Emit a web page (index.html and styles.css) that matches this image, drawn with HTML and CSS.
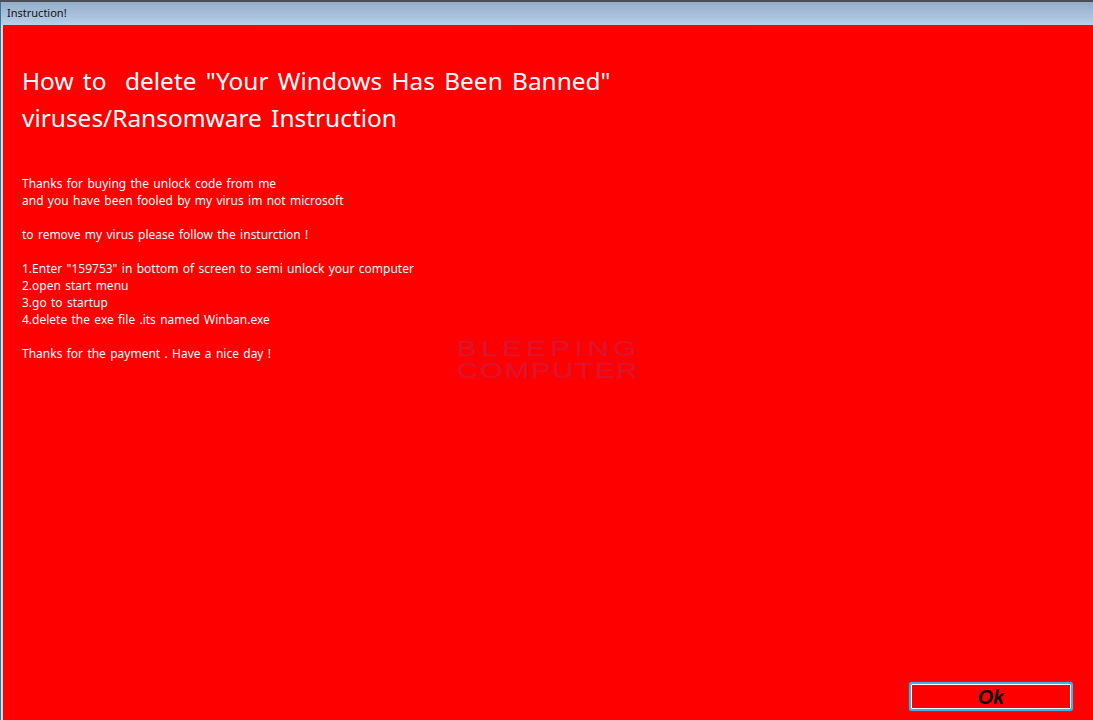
FILE: index.html
```html
<!DOCTYPE html>
<html lang="en">
<head>
<meta charset="utf-8">
<title>Instruction!</title>
<link rel="stylesheet" href="styles.css">
</head>
<body>
<div class="window">
  <header class="titlebar">Instruction!</header>
  <main class="content">
    <h1 class="heading">How to&nbsp; delete "Your Windows Has Been Banned"<br>viruses/Ransomware Instruction</h1>
    <p class="message">Thanks for buying the unlock code from me<br>and you have been fooled by my virus im not microsoft<br><br>to remove my virus please follow the insturction !<br><br>1.Enter "159753" in bottom of screen to semi unlock your computer<br>2.open start menu<br>3.go to startup<br>4.delete the exe file .its named Winban.exe<br><br>Thanks for the payment . Have a nice day !</p>
    <div class="watermark">
      <div class="wm-top">BLEEPING</div>
      <div class="wm-bottom">COMPUTER</div>
    </div>
    <div class="actions"><button class="ok" type="button">Ok</button></div>
  </main>
</div>
</body>
</html>
```
FILE: styles.css
```css
* { box-sizing: border-box; }
html, body { margin: 0; height: 100%; overflow: hidden; }
.window {
  height: 720px;
  display: flex;
  flex-direction: column;
  border-top: 2px solid #4a4f55;
  background: linear-gradient(90deg, #3f7396 0 1px, #cfe3f3 1px 3px);
}
.titlebar {
  height: 23px;
  padding: 3px 0 0 6px;
  font: 11px/16px "Noto Sans", sans-serif;
  color: #111;
  background: linear-gradient(#94adc9, #b7cfe9);
  border-left: 1px solid #3f7396;
}
.content {
  position: relative;
  flex: 1;
  margin-left: 3px;
  padding: 37px 0 0 19px;
  display: flex;
  flex-direction: column;
  background: #ff0000;
  color: #fff;
}
.heading {
  margin: 0;
  font: 400 24.45px/37px "Noto Sans", sans-serif;
  word-spacing: 2.9px;
}
.message {
  margin: 39px 0 0;
  font: 12px/17px "Noto Sans", sans-serif;
  word-spacing: 1.2px;
}
.watermark {
  position: absolute;
  left: 454px;
  top: 313px;
  width: 150px;
  transform: scaleX(1.32);
  transform-origin: left top;
  font: 400 22.4px/22px "Liberation Sans", sans-serif;
  color: #e0122c;
  -webkit-text-stroke: 0.4px #e0122c;
  white-space: nowrap;
}
.wm-top { letter-spacing: 3.4px; }
.wm-bottom { letter-spacing: 1.25px; }
.actions {
  margin-top: auto;
  padding: 0 20px 9px 0;
  display: flex;
  justify-content: flex-end;
}
.ok {
  width: 164px;
  height: 29px;
  padding: 2px 0 0;
  background: #ff0000;
  border: 2px solid #38b4e6;
  border-radius: 3px;
  box-shadow: inset 0 0 0 1px #fff, 0 0 1px #38b4e6;
  font: italic 700 19.5px/1 "Liberation Sans", sans-serif;
  color: #000;
}
```
